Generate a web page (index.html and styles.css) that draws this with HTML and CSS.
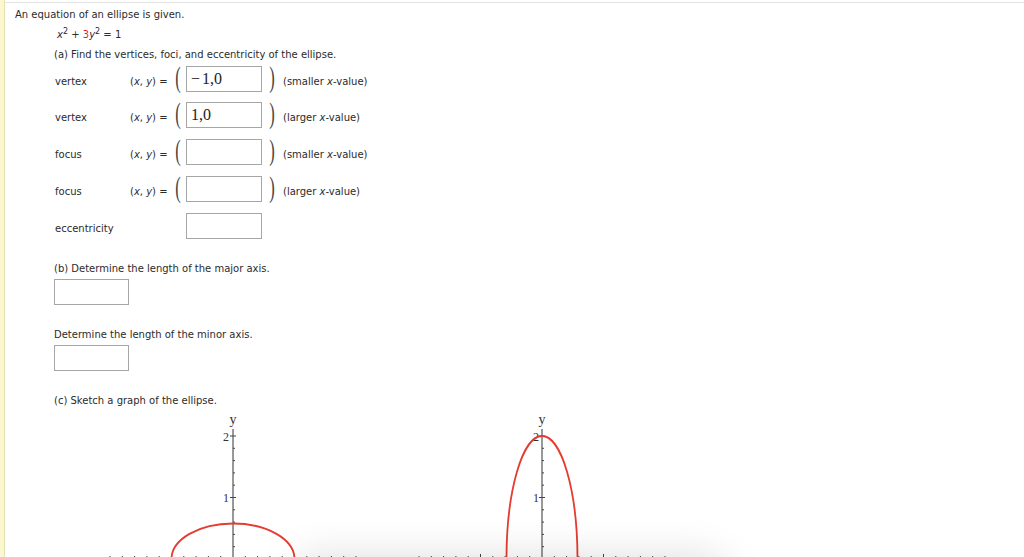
FILE: index.html
```html
<!DOCTYPE html>
<html>
<head>
<meta charset="utf-8">
<link rel="stylesheet" href="styles.css">
</head>
<body>
<div class="page">
  <div class="strip"></div>
  <div class="main">
    <p class="intro">An equation of an ellipse is given.</p>
    <div class="body">
      <p class="eq"><i>x</i><sup>2</sup> + <span class="red">3</span><i>y</i><sup>2</sup> = 1</p>
      <p class="part">(a) Find the vertices, foci, and eccentricity of the ellipse.</p>
      <div class="rows">
        <div class="row first">
          <span class="label">vertex</span>
          <span class="xy">(<i>x</i>, <i>y</i>) =</span>
          <span class="paren pl">(</span>
          <span class="box filled">−<span class="mm"></span>1,0</span>
          <span class="paren pr">)</span>
          <span class="note">(smaller <i>x</i>-value)</span>
        </div>
        <div class="row">
          <span class="label">vertex</span>
          <span class="xy">(<i>x</i>, <i>y</i>) =</span>
          <span class="paren pl">(</span>
          <span class="box filled">1,0</span>
          <span class="paren pr">)</span>
          <span class="note">(larger <i>x</i>-value)</span>
        </div>
        <div class="row">
          <span class="label">focus</span>
          <span class="xy">(<i>x</i>, <i>y</i>) =</span>
          <span class="paren pl">(</span>
          <span class="box"></span>
          <span class="paren pr">)</span>
          <span class="note">(smaller <i>x</i>-value)</span>
        </div>
        <div class="row">
          <span class="label">focus</span>
          <span class="xy">(<i>x</i>, <i>y</i>) =</span>
          <span class="paren pl">(</span>
          <span class="box"></span>
          <span class="paren pr">)</span>
          <span class="note">(larger <i>x</i>-value)</span>
        </div>
        <div class="row">
          <span class="label">eccentricity</span>
          <span class="spacer"></span>
          <span class="box"></span>
        </div>
      </div>
      <p class="part pb">(b) Determine the length of the major axis.</p>
      <div class="box wide"></div>
      <p class="part pm">Determine the length of the minor axis.</p>
      <div class="box wide"></div>
      <p class="part pc">(c) Sketch a graph of the ellipse.</p>
      <svg class="graphs" width="720" height="156" viewBox="0 0 720 156">
        <g transform="translate(179,154)">
          <path class="axis" d="M0 0 V-130 M-140 0 H140"/>
          <path class="tick" d="M-123 0v-3M-110.7 0v-3M-98.4 0v-3M-86.1 0v-3M-73.8 0v-3M-49.2 0v-3M-36.9 0v-3M-24.6 0v-3M-12.3 0v-3M12.3 0v-3M24.6 0v-3M36.9 0v-3M49.2 0v-3M73.8 0v-3M86.1 0v-3M98.4 0v-3M110.7 0v-3M123 0v-3M-61.5 0v-5M61.5 0v-5M0 -12.3h2M0 -24.6h2M0 -36.9h2M0 -49.2h2M0 -73.8h2M0 -86.1h2M0 -98.4h2M0 -110.7h2M-3 -61.5h6M-3 -123h6"/>
          <text class="lab ylab" x="0" y="-135">y</text>
          <text class="lab num" x="-4" y="-118">2</text>
          <text class="lab num" x="-4" y="-57">1</text>
          <ellipse class="curve" cx="0" cy="0" rx="61.5" ry="35.5"/>
        </g>
        <g transform="translate(488,154)">
          <path class="axis" d="M0 0 V-130 M-140 0 H140"/>
          <path class="tick" d="M-123 0v-3M-110.7 0v-3M-98.4 0v-3M-86.1 0v-3M-73.8 0v-3M-49.2 0v-3M-36.9 0v-3M-24.6 0v-3M-12.3 0v-3M12.3 0v-3M24.6 0v-3M36.9 0v-3M49.2 0v-3M73.8 0v-3M86.1 0v-3M98.4 0v-3M110.7 0v-3M123 0v-3M-61.5 0v-5M61.5 0v-5M0 -12.3h2M0 -24.6h2M0 -36.9h2M0 -49.2h2M0 -73.8h2M0 -86.1h2M0 -98.4h2M0 -110.7h2M-3 -61.5h6M-3 -123h6"/>
          <text class="lab ylab" x="0" y="-135">y</text>
          <text class="lab num" x="-3" y="-118">2</text>
          <text class="lab num" x="-3" y="-57">1</text>
          <ellipse class="curve" cx="0" cy="0" rx="35.5" ry="123"/>
        </g>
      </svg>
    </div>
  </div>
  <div class="shadow"></div>
</div>
</body>
</html>
```
FILE: styles.css
```css
html, body {
  margin: 0;
  height: 557px;
  overflow: hidden;
  background: #fff;
}
body {
  font-family: "DejaVu Sans", Verdana, sans-serif;
  font-size: 10px;
  color: #2b2b2b;
}
p { margin: 0; }
.page {
  display: flex;
  height: 557px;
  position: relative;
  overflow: hidden;
}
.strip {
  flex: none;
  width: 4px;
  background: #fbf8cf;
  border-right: 1px solid #e4e0b8;
}
.main {
  flex: 1;
  margin-top: 2px;
  border-top: 1px solid #e3e3e3;
  padding: 2px 0 0 10px;
}
.intro, .eq, .part { line-height: 20px; }
.body { margin-left: 39px; }
.eq { padding-left: 3px; }
.eq sup { font-size: 8px; line-height: 0; vertical-align: 4px; }
.red { color: #e5261f; }
.row {
  display: flex;
  align-items: flex-start;
  height: 37px;
}
.row.first { height: 36px; }
.label {
  flex: none;
  width: 75px;
  margin-left: 1px;
  line-height: 14px;
  margin-top: 10px;
}
.xy {
  flex: none;
  width: 43px;
  line-height: 14px;
  margin-top: 10px;
}
.spacer { flex: none; width: 56px; }
.paren {
  flex: none;
  display: inline-block;
  width: 10px;
  font-family: "Liberation Serif", "Times New Roman", serif;
  font-size: 30px;
  line-height: 24px;
  text-align: center;
  transform: scale(0.55, 1);
  color: #444;
}
.pr { margin-left: 5px; }
.box {
  flex: none;
  box-sizing: border-box;
  width: 76px;
  height: 26px;
  border: 1px solid #a6a6a6;
  background: #fff;
  margin-top: 1px;
}
.pl + .box { margin-left: 3px; }
.box.filled {
  font-family: "Liberation Serif", "Times New Roman", serif;
  font-size: 16px;
  line-height: 23px;
  padding-left: 4px;
  color: #222;
}
.mm { display: inline-block; width: 2px; }
.note {
  flex: none;
  line-height: 14px;
  margin-top: 10px;
  margin-left: 6px;
}
.pb { margin-top: 10px; }
.pm { margin-top: 20px; }
.pc { margin-top: 20px; }
.box.wide { margin-top: 0; width: 75px; }
.graphs { display: block; margin-top: -6px; }
.axis { stroke: #333; stroke-width: 1; fill: none; }
.tick { stroke: #444; stroke-width: 1; fill: none; }
.lab { font-family: "Liberation Serif", "Times New Roman", serif; fill: #333; }
.ylab { font-size: 14px; text-anchor: middle; }
.num { font-size: 12px; text-anchor: end; }
.curve { fill: none; stroke: #e53b30; stroke-width: 1.8; }
.shadow {
  position: absolute;
  left: 300px;
  top: 566px;
  width: 420px;
  height: 40px;
  border-radius: 20px;
  box-shadow: 0 0 40px 10px rgba(0, 0, 0, 0.13);
  pointer-events: none;
}
```
